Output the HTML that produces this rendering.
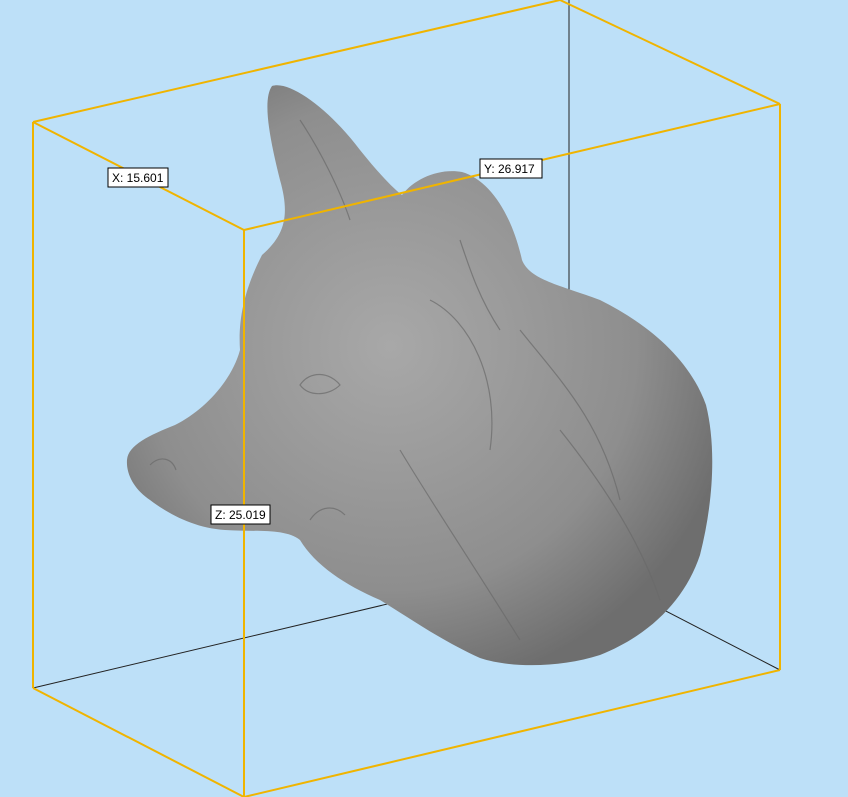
<!DOCTYPE html>
<html><head><meta charset="utf-8"><style>
html,body{margin:0;padding:0;background:#bde0f8;}
svg{display:block}
text{font-family:"Liberation Sans",sans-serif;font-size:12px;fill:#000}
</style></head><body>
<svg width="848" height="797" viewBox="0 0 848 797" xmlns="http://www.w3.org/2000/svg">
<defs>
<radialGradient id="g" cx="0.45" cy="0.45" r="0.6">
<stop offset="0" stop-color="#a8a8a8"/>
<stop offset="0.7" stop-color="#8e8e8e"/>
<stop offset="1" stop-color="#6e6e6e"/>
</radialGradient>
</defs>
<rect width="848" height="797" fill="#bde0f8"/>
<!-- back black lines -->
<g stroke="#222" stroke-width="1" fill="none">
<line x1="569" y1="0" x2="569" y2="561"/>
<line x1="569" y1="561" x2="33" y2="688"/>
<line x1="569" y1="561" x2="780" y2="670"/>
</g>
<!-- wolf -->
<path fill="url(#g)" d="M127,460 C128,445 150,435 175,425 C205,410 232,380 240,350 C238,320 244,290 262,255 C285,235 290,215 280,180 C270,140 262,100 272,86 C290,80 330,110 360,150 C380,175 395,190 402,195 C415,178 440,168 462,172 C490,180 512,215 522,260 C530,280 560,285 600,300 C650,325 690,360 706,405 C716,445 714,500 700,555 C685,600 650,635 600,655 C560,668 510,668 480,658 C440,640 405,615 380,600 C345,585 315,565 300,540 C285,528 255,532 225,530 C195,528 170,515 150,500 C135,490 126,475 127,460 Z"/>
<g fill="none" stroke="#6a6a6a" stroke-width="1.2" opacity="0.7">
<path d="M300,385 C310,370 330,372 340,385 C330,395 310,398 300,385 Z"/>
<path d="M150,465 C160,455 172,458 176,470"/>
<path d="M310,520 C320,505 335,505 345,515"/>
<path d="M430,300 C470,320 500,380 490,450 M520,330 C560,380 600,420 620,500 M560,430 C600,480 640,540 660,600 M400,450 C430,500 470,560 520,640 M460,240 C470,270 480,300 500,330 M300,120 C320,150 340,190 350,220"/>
</g>
<!-- front yellow box -->
<g stroke="#f0b400" stroke-width="2" fill="none">
<line x1="33" y1="122" x2="560" y2="0"/>
<line x1="560" y1="0" x2="780" y2="104"/>
<line x1="33" y1="122" x2="244" y2="230"/>
<line x1="244" y1="230" x2="780" y2="104"/>
<line x1="33" y1="122" x2="33" y2="688"/>
<line x1="244" y1="230" x2="244" y2="797"/>
<line x1="780" y1="104" x2="780" y2="670"/>
<line x1="33" y1="688" x2="244" y2="797"/>
<line x1="244" y1="797" x2="780" y2="670"/>
</g>
<g>
<rect x="108" y="168" width="60" height="19" fill="#fff" stroke="#000"/>
<text x="112" y="182">X: 15.601</text>
<rect x="480" y="159" width="62" height="19" fill="#fff" stroke="#000"/>
<text x="484" y="173">Y: 26.917</text>
<rect x="211" y="505" width="59" height="19" fill="#fff" stroke="#000"/>
<text x="215" y="519">Z: 25.019</text>
</g>
</svg>
</body></html>
